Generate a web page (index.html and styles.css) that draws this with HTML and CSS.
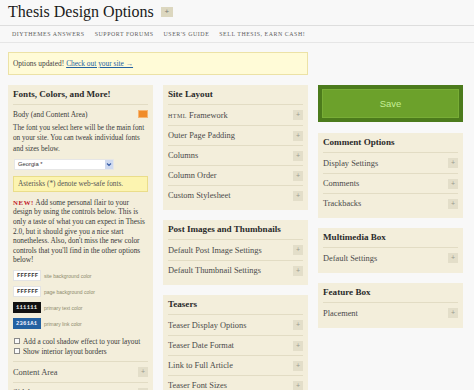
FILE: index.html
```html
<!DOCTYPE html>
<html>
<head>
<meta charset="utf-8">
<link rel="stylesheet" href="styles.css">
</head>
<body>
<div class="head">
  <h1 class="title">Thesis Design Options</h1>
  <span class="tbtn">+</span>
</div>
<nav class="nav">
  <a>DIYThemes Answers</a>
  <a>Support Forums</a>
  <a>User's Guide</a>
  <a>Sell Thesis, Earn Cash!</a>
</nav>
<div class="notice">Options updated! <a class="link">Check out your site &rarr;</a></div>

<div class="cols">
  <div class="col">
    <section class="panel">
      <h2 class="ph">Fonts, Colors, and More!</h2>
      <div class="sub"><span>Body (and Content Area)</span><span class="obtn"></span></div>
      <p class="txt">The font you select here will be the main font on your site. You can tweak individual fonts and sizes below.</p>
      <div class="select"><span>Georgia *</span><span class="arrow"><svg width="6" height="5" viewBox="0 0 6 5"><path d="M1 1.5 L3 3.5 L5 1.5" fill="none" stroke="#3a5fa8" stroke-width="1.2"/></svg></span></div>
      <div class="note">Asterisks (*) denote web-safe fonts.</div>
      <p class="txt2"><b class="new">NEW!</b> Add some personal flair to your<br>design by using the controls below. This is<br>only a taste of what you can expect in Thesis<br>2.0, but it should give you a nice start<br>nonetheless. Also, don't miss the new color<br>controls that you'll find in the other options<br>below!</p>
      <div class="sw"><span class="chip c-w">FFFFFF</span><span class="lbl">site background color</span></div>
      <div class="sw"><span class="chip c-w">FFFFFF</span><span class="lbl">page background color</span></div>
      <div class="sw"><span class="chip c-k">111111</span><span class="lbl">primary text color</span></div>
      <div class="sw"><span class="chip c-b">2361A1</span><span class="lbl">primary link color</span></div>
      <label class="cb"><span class="box"></span>Add a cool shadow effect to your layout</label>
      <label class="cb"><span class="box"></span>Show interior layout borders</label>
      <div class="rows rows-l">
        <div class="row"><span>Content Area</span><span class="pbtn">+</span></div>
        <div class="row"><span>Sidebars</span><span class="pbtn">+</span></div>
      </div>
    </section>
  </div>

  <div class="col">
    <section class="panel">
      <h2 class="ph">Site Layout</h2>
      <div class="row"><span><span class="sc">html</span> Framework</span><span class="pbtn">+</span></div>
      <div class="row"><span>Outer Page Padding</span><span class="pbtn">+</span></div>
      <div class="row"><span>Columns</span><span class="pbtn">+</span></div>
      <div class="row"><span>Column Order</span><span class="pbtn">+</span></div>
      <div class="row"><span>Custom Stylesheet</span><span class="pbtn">+</span></div>
    </section>
    <section class="panel">
      <h2 class="ph">Post Images and Thumbnails</h2>
      <div class="row"><span>Default Post Image Settings</span><span class="pbtn">+</span></div>
      <div class="row"><span>Default Thumbnail Settings</span><span class="pbtn">+</span></div>
    </section>
    <section class="panel">
      <h2 class="ph">Teasers</h2>
      <div class="row"><span>Teaser Display Options</span><span class="pbtn">+</span></div>
      <div class="row"><span>Teaser Date Format</span><span class="pbtn">+</span></div>
      <div class="row"><span>Link to Full Article</span><span class="pbtn">+</span></div>
      <div class="row"><span>Teaser Font Sizes</span><span class="pbtn">+</span></div>
    </section>
  </div>

  <div class="col">
    <div class="save"><span>Save</span></div>
    <section class="panel">
      <h2 class="ph">Comment Options</h2>
      <div class="row"><span>Display Settings</span><span class="pbtn">+</span></div>
      <div class="row"><span>Comments</span><span class="pbtn">+</span></div>
      <div class="row"><span>Trackbacks</span><span class="pbtn">+</span></div>
    </section>
    <section class="panel">
      <h2 class="ph">Multimedia Box</h2>
      <div class="row"><span>Default Settings</span><span class="pbtn">+</span></div>
    </section>
    <section class="panel">
      <h2 class="ph">Feature Box</h2>
      <div class="row"><span>Placement</span><span class="pbtn">+</span></div>
    </section>
  </div>
</div>
</body>
</html>
```
FILE: styles.css
```css
* { box-sizing: border-box; }
html, body { margin: 0; padding: 0; }
body {
  background: #f8f8f8;
  font-family: "Liberation Serif", "Times New Roman", serif;
  color: #333;
  width: 474px;
  height: 390px;
  overflow: hidden;
}
.head {
  display: flex;
  align-items: center;
  height: 25px;
  padding: 0 0 2px 8px;
}
.title {
  margin: 0;
  font-size: 16px;
  font-weight: normal;
  color: #1a1a1a;
  line-height: 20px;
}
.tbtn {
  margin-left: 7px;
  width: 12px;
  height: 10px;
  background: #dcd7bf;
  color: #777;
  font-size: 8px;
  line-height: 10px;
  text-align: center;
  font-family: "Liberation Sans", sans-serif;
}
.nav {
  border-top: 1px solid #dedede;
  border-bottom: 1px solid #e6e6e6;
  height: 18px;
  display: flex;
  align-items: center;
  gap: 10px;
  padding-left: 12px;
}
.nav a {
  text-transform: uppercase;
  font-size: 5.9px;
  letter-spacing: 0.55px;
  color: #5e5e5e;
}
.notice {
  margin: 9px 0 0 8px;
  width: 300px;
  height: 23px;
  background: #fffbd7;
  border: 1px solid #ece2a6;
  font-size: 7.4px;
  padding-left: 4px;
  display: flex;
  align-items: center;
  gap: 2px;
  color: #444;
}
.link { color: #2361a1; text-decoration: underline; }
.cols {
  display: flex;
  gap: 10px;
  margin: 10px 0 0 8px;
  align-items: flex-start;
}
.col {
  width: 145px;
  display: flex;
  flex-direction: column;
  gap: 10px;
}
.panel {
  background: #f3eedb;
  padding: 0 5px 5px;
}
.ph {
  margin: 0;
  height: 20px;
  line-height: 19px;
  font-size: 9.1px;
  font-weight: bold;
  color: #2a2a2a;
  border-bottom: 1px solid #e2dcc4;
}
.row {
  height: 20px;
  display: flex;
  align-items: center;
  justify-content: space-between;
  font-size: 8.4px;
  color: #4a4a4a;
}
.row + .row { border-top: 1px solid #e2dcc4; }
.sc { font-variant: small-caps; text-transform: lowercase; letter-spacing: 0.5px; font-size: 9px; }
.pbtn {
  width: 10px;
  height: 10px;
  background: #e3dec9;
  color: #9a9a8e;
  font-size: 7px;
  line-height: 10px;
  text-align: center;
  font-family: "Liberation Sans", sans-serif;
}
.sub {
  display: flex;
  justify-content: space-between;
  align-items: center;
  height: 18px;
  font-size: 7.4px;
  color: #3a3a3a;
}
.obtn {
  width: 10px;
  height: 8px;
  background: #f08c2a;
  border: 1px solid #f6b572;
}
.txt {
  margin: 0;
  font-size: 7.2px;
  line-height: 10.3px;
  color: #3a3a3a;
}
.select {
  margin: 5px 0 0 1px;
  width: 100px;
  height: 11px;
  background: #fff;
  border: 1px solid #e6e6e6;
  display: flex;
  align-items: center;
  justify-content: space-between;
  font-family: "Liberation Sans", sans-serif;
  font-size: 5.8px;
  color: #333;
  padding-left: 3px;
}
.arrow {
  width: 8px;
  height: 9px;
  background: #cfdaf0;
  display: flex;
  align-items: center;
  justify-content: center;
}
.note {
  margin-top: 6px;
  height: 16px;
  background: #fcf4b0;
  border: 1px solid #eadd8a;
  font-size: 7.3px;
  display: flex;
  align-items: center;
  padding-left: 4px;
  color: #555;
}
.txt2 {
  margin: 6px -4px 0 0;
  font-size: 7.35px;
  line-height: 9.6px;
  color: #3a3a3a;
  white-space: nowrap;
}
.new { color: #c0172a; font-size: 6.8px; letter-spacing: 0.6px; }
.sw {
  display: flex;
  align-items: center;
  gap: 3px;
  height: 11px;
  margin-top: 5px;
}
.sw:first-of-type { margin-top: 7px; }
.chip {
  width: 28px;
  height: 11px;
  font-family: "Liberation Mono", monospace;
  font-weight: bold;
  font-size: 5.6px;
  line-height: 11px;
  padding-left: 3px;
  letter-spacing: 0.2px;
}
.c-w { background: #fff; color: #333; border: 1px solid #e3e3e3; line-height: 9px; }
.c-k { background: #111; color: #eee; }
.c-b { background: #2361a1; color: #eef; }
.lbl {
  font-family: "Liberation Sans", sans-serif;
  font-size: 5px;
  color: #8d8a6c;
}
.cb {
  display: flex;
  align-items: center;
  gap: 3px;
  height: 10px;
  font-size: 7.3px;
  color: #3a3a3a;
}
.cb:first-of-type { margin-top: 7px; }
.box {
  width: 6px;
  height: 6px;
  border: 1px solid #8a8a8a;
  background: #fafafa;
  margin-left: 1px;
}
.rows-l { margin-top: 5px; border-top: 1px solid #e2dcc4; }
.save {
  height: 37px;
  background: #4c7b1c;
  padding: 4px;
  display: flex;
}
.save span {
  flex: 1;
  background: #6ca12b;
  border: 1px solid #78ad36;
  color: #c5ee95;
  font-family: "Liberation Sans", sans-serif;
  font-size: 9.5px;
  display: flex;
  align-items: center;
  justify-content: center;
}
.col .save + .panel { margin-top: 1px; }
```
